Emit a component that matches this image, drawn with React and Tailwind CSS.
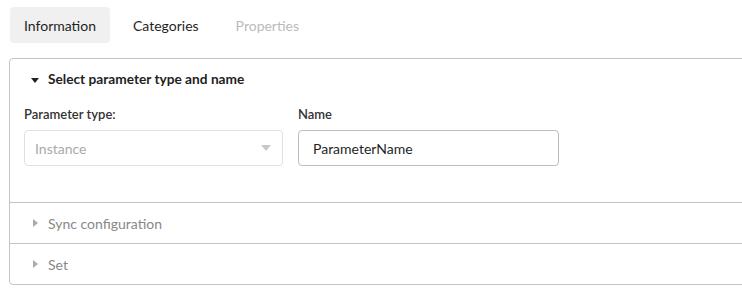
import React from 'react'

const Caret = ({ open, className }) => (
  <svg width="8" height="8" viewBox="0 0 8 8" className={className}>
    {open ? <path d="M0 2h8L4 7z" fill="currentColor" /> : <path d="M2 0v8l5-4z" fill="currentColor" />}
  </svg>
)

const App = () => {
  const tabs = [
    { label: 'Information', active: true },
    { label: 'Categories' },
    { label: 'Properties', disabled: true },
  ]

  return (
    <div className="w-[742px] h-[293px] overflow-hidden bg-white font-['Lato','Open_Sans',sans-serif] text-[14px] text-[#1f1f1f]">
      <div className="flex gap-[9px] pl-[10px] pt-[7px]">
        {tabs.map((t) => (
          <div
            key={t.label}
            className={`h-[36px] px-[14px] flex items-center rounded-[4px] ${t.active ? 'bg-[#f0f0f0]' : ''} ${t.disabled ? 'text-[#bbbbbb]' : 'text-[#1f1f1f]'}`}
          >
            {t.label}
          </div>
        ))}
      </div>

      <div className="ml-[9px] mt-[15px] w-[760px] border border-[#c4c4c4] rounded-[4px]">
        <div className="border-b border-[#c4c4c4]">
          <div className="h-[41px] flex items-center pl-[21px] gap-[9px] font-bold text-[13.7px]">
            <Caret open className="text-[#222]" />
            <span>Select parameter type and name</span>
          </div>
          <div className="flex gap-[15px] pl-[14px] pt-[6px] pb-[36px]">
            <div className="w-[259px]">
              <div className="h-[18px] mb-[6px] flex items-center text-[13px] font-semibold text-[#333]">Parameter type:</div>
              <div className="h-[36px] border border-[#e0e0e0] rounded-[4px] flex items-center justify-between pl-[10px] pr-[11px] text-[#aaaaaa]">
                <span>Instance</span>
                <svg width="10" height="6" viewBox="0 0 10 6"><path d="M0 0h10L5 6z" fill="#c8c8c8" /></svg>
              </div>
            </div>
            <div className="w-[261px]">
              <div className="h-[18px] mb-[6px] flex items-center text-[13px] font-semibold text-[#333]">Name</div>
              <div className="h-[36px] border border-[#bdbdbd] rounded-[4px] flex items-center pl-[14px] text-[#1f1f1f]">
                ParameterName
              </div>
            </div>
          </div>
        </div>
        <div className="h-[41px] border-b border-[#c4c4c4] flex items-center pl-[21px] gap-[9px] text-[#888888]">
          <Caret className="text-[#aaaaaa]" />
          <span>Sync configuration</span>
        </div>
        <div className="h-[40px] flex items-center pl-[21px] gap-[9px] text-[#888888]">
          <Caret className="text-[#aaaaaa]" />
          <span>Set</span>
        </div>
      </div>
    </div>
  )
}

export default App
